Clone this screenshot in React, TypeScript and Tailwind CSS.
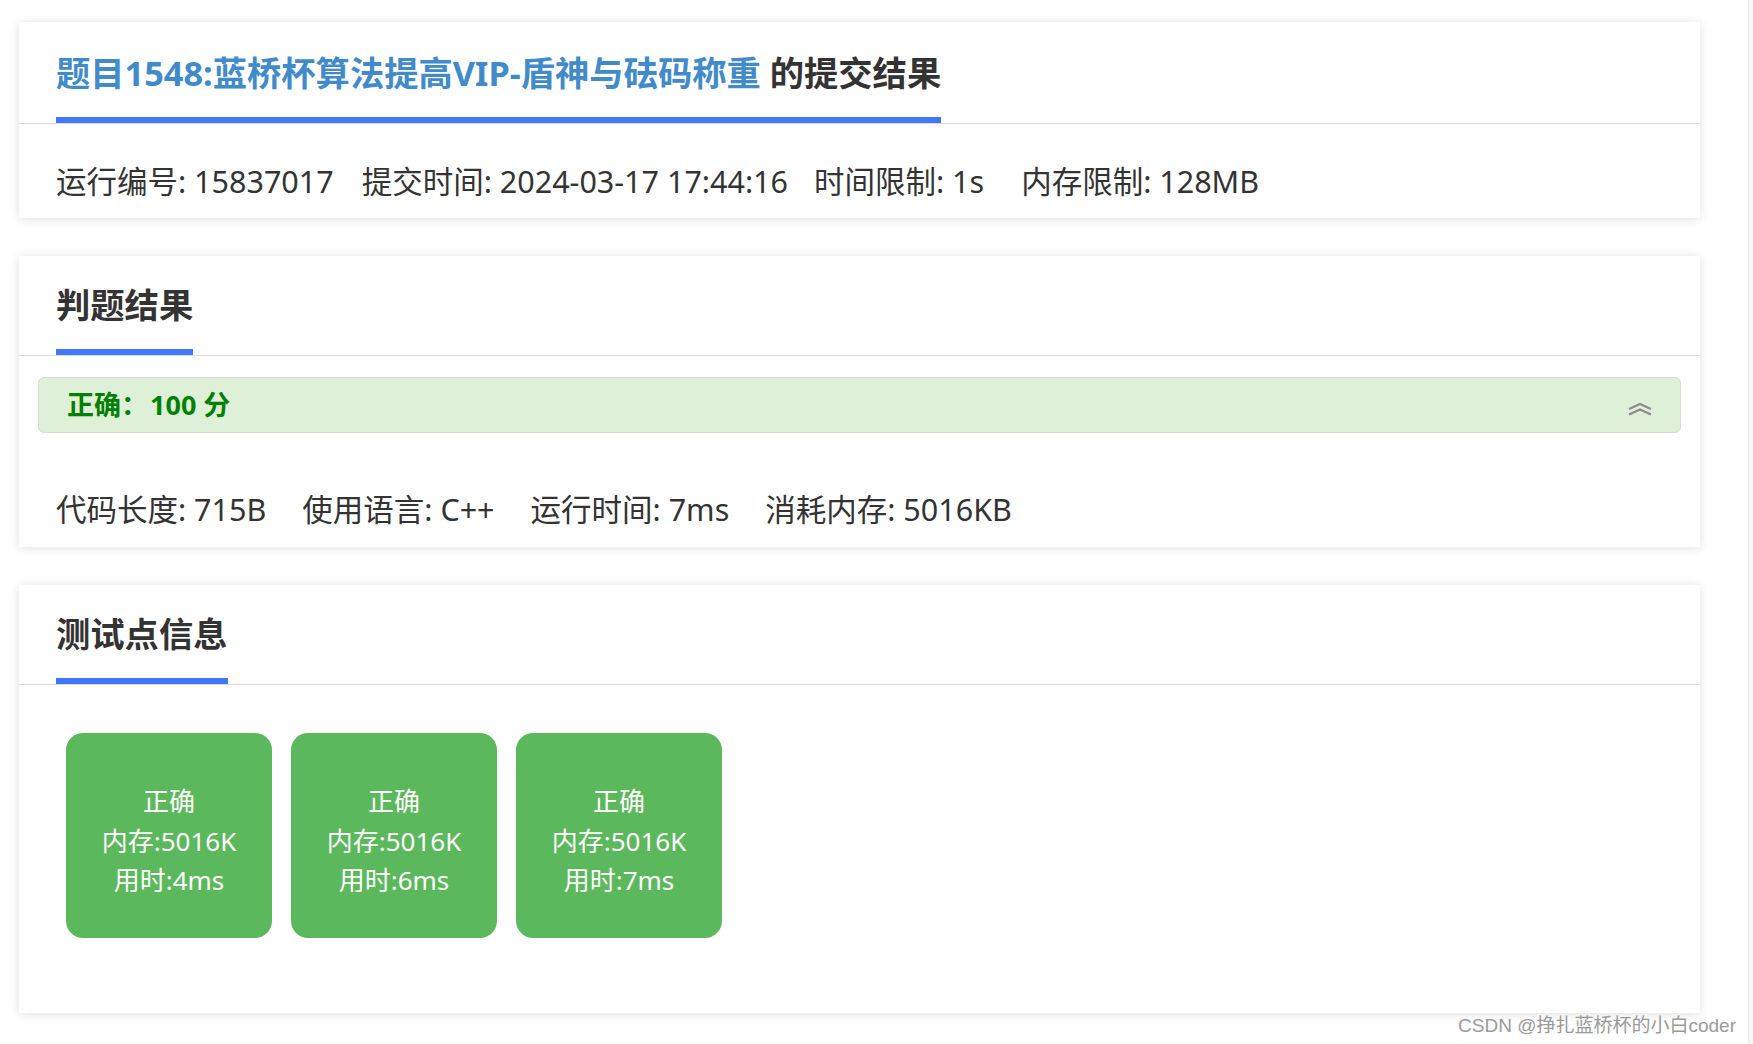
import { type ReactNode } from 'react';

const SUBMIT_INFO = [
  { label: '运行编号', value: '15837017', gap: 'mr-[28px]' },
  { label: '提交时间', value: '2024-03-17 17:44:16', gap: 'mr-[26px]' },
  { label: '时间限制', value: '1s', gap: 'mr-[37px]' },
  { label: '内存限制', value: '128MB', gap: '' },
];

const JUDGE_INFO = [
  { label: '代码长度', value: '715B', gap: 'mr-[36px]' },
  { label: '使用语言', value: 'C++', gap: 'mr-[36px]' },
  { label: '运行时间', value: '7ms', gap: 'mr-[36px]' },
  { label: '消耗内存', value: '5016KB', gap: '' },
];

const TEST_POINTS = [
  { id: 't1', mem: '5016K', time: '4ms' },
  { id: 't2', mem: '5016K', time: '6ms' },
  { id: 't3', mem: '5016K', time: '7ms' },
];

export default function App() {
  return (
    <div className="flex h-[1044px] w-[1753px] overflow-hidden bg-white font-[family-name:'Noto_Sans','Noto_Sans_CJK_SC',sans-serif] text-[#333]">
      <div className="flex w-[1748px] flex-col">
        <div className="ml-[19px] mt-[22px] flex w-[1681px] flex-col gap-[38px]">
          <Card
            title={
              <>
                <span className="text-[#428bca]">题目1548:蓝桥杯算法提高VIP-盾神与砝码称重</span>{' '}
                <span>的提交结果</span>
              </>
            }
            headerPad="pt-[31px]"
          >
            <InfoLine items={SUBMIT_INFO} className="pt-[37px] pb-[17px]" />
          </Card>

          <Card title="判题结果" headerPad="pt-[29px]">
            <div className="mx-[19px] mt-[21px] flex h-[56px] items-center justify-between rounded-[6px] border border-[#d3ddd0] bg-[#dff0d8] pl-[28px] pr-[27px]">
              <span className="text-[27px] font-bold text-[#008000]">
                正确：<span className="ml-[2px]">100 分</span>
              </span>
              <DoubleChevronUp />
            </div>
            <InfoLine items={JUDGE_INFO} className="pt-[56px] pb-[18px]" />
          </Card>

          <Card title="测试点信息" headerPad="pt-[29px]">
            <div className="flex gap-[19px] pl-[47px] pt-[48px] pb-[75px]">
              {TEST_POINTS.map((t) => (
                <div
                  key={t.id}
                  className="flex h-[205px] w-[206px] flex-col items-center justify-center rounded-[17px] bg-[#5cb85c] pt-[12px] text-[26px] leading-[39.5px] text-white"
                >
                  <span>正确</span>
                  <span>内存:{t.mem}</span>
                  <span>用时:{t.time}</span>
                </div>
              ))}
            </div>
          </Card>
        </div>

        <div className="mt-auto mb-[6px] mr-[12px] text-right font-[family-name:'Liberation_Sans','Noto_Sans_CJK_SC',sans-serif] text-[19px] leading-[26px] text-[#9a9a9a] [text-shadow:0_0_1px_rgba(255,255,255,0.9)]">
          CSDN @挣扎蓝桥杯的小白coder
        </div>
      </div>
      <div className="w-[5px] border-l border-[#ececec] bg-[#f7f7f7]" />
    </div>
  );
}

function Card({
  title,
  headerPad,
  children,
}: {
  title: ReactNode;
  headerPad: string;
  children: ReactNode;
}) {
  return (
    <section className="bg-white shadow-[0_1px_10px_rgba(0,0,0,0.13)]">
      <div className={`border-b border-[#dcdcdc] px-[37px] ${headerPad}`}>
        <h2 className="inline-block border-b-[6px] border-[#4176fa] pb-[24px] text-[34.3px] font-bold leading-[40px] text-[#333]">
          {title}
        </h2>
      </div>
      {children}
    </section>
  );
}

function InfoLine({
  items,
  className,
}: {
  items: { label: string; value: string; gap: string }[];
  className: string;
}) {
  return (
    <div className={`flex px-[37px] text-[30.5px] leading-[40px] text-[#333] ${className}`}>
      {items.map((it) => (
        <span key={it.label} className={it.gap}>
          {it.label}: {it.value}
        </span>
      ))}
    </div>
  );
}

function DoubleChevronUp() {
  return (
    <svg width="26" height="14" viewBox="0 0 26 14" fill="none" className="mt-[8px]">
      <path d="M2 7 L13 2 L24 7" stroke="#8c8c8c" strokeWidth="2.4" />
      <path d="M2 12.5 L13 7.5 L24 12.5" stroke="#8c8c8c" strokeWidth="2.4" />
    </svg>
  );
}
